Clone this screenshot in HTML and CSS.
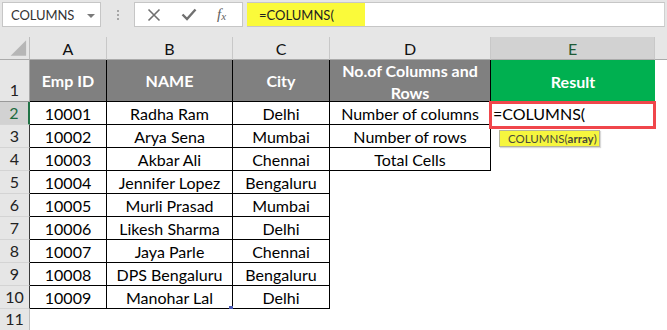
FILE: index.html
```html
<!DOCTYPE html>
<html>
<head>
<meta charset="utf-8">
<link rel="stylesheet" href="styles.css">
</head>
<body>
<div class="app">
  <div class="fbar">
    <div class="namebox"><span class="nb-text">COLUMNS</span><span class="caret"></span></div>
    <div class="grip"><i></i><i></i><i></i></div>
    <div class="fbtns">
      <svg class="ico" width="16" height="16" viewBox="0 0 16 16"><path d="M2.5 2.5 L13.5 13.5 M13.5 2.5 L2.5 13.5" stroke="#707070" stroke-width="1.6" fill="none"/></svg>
      <svg class="ico" width="16" height="16" viewBox="0 0 16 16"><path d="M1.5 7.5 L6 12 L14.5 2.5" stroke="#707070" stroke-width="2.4" fill="none"/></svg>
      <span class="fx">f<span class="fxx">x</span></span>
    </div>
    <div class="finput"><span class="hl">=COLUMNS(</span></div>
  </div>

  <div class="sheet">
    <div class="corner"><svg width="30" height="23" viewBox="0 0 30 23"><polygon points="27,4 27,20 11,20" fill="#b6b6b6"/></svg></div>
    <div class="ch">A</div>
    <div class="ch">B</div>
    <div class="ch">C</div>
    <div class="ch">D</div>
    <div class="ch sel">E</div>
    <div class="ch last"></div>

    <div class="rh r1">1</div>
    <div class="hd t">Emp ID</div>
    <div class="hd t">NAME</div>
    <div class="hd t">City</div>
    <div class="hd t wrap">No.of Columns and Rows</div>
    <div class="hd green">Result</div>
    <div class="c"></div>

    <div class="rh sel">2</div>
    <div class="t">10001</div>
    <div class="t">Radha Ram</div>
    <div class="t">Delhi</div>
    <div class="t">Number of columns</div>
    <div class="c active">=COLUMNS(
      <div class="redbox"></div>
      <div class="tip">COLUMNS(<b>array</b>)</div>
    </div>
    <div class="c"></div>

    <div class="rh in">3</div>
    <div class="t">10002</div>
    <div class="t">Arya Sena</div>
    <div class="t">Mumbai</div>
    <div class="t">Number of rows</div>
    <div class="c"></div>
    <div class="c"></div>

    <div class="rh in">4</div>
    <div class="t">10003</div>
    <div class="t">Akbar Ali</div>
    <div class="t">Chennai</div>
    <div class="t">Total Cells</div>
    <div class="c"></div>
    <div class="c"></div>

    <div class="rh in">5</div>
    <div class="t">10004</div>
    <div class="t">Jennifer Lopez</div>
    <div class="t">Bengaluru</div>
    <div class="c"></div>
    <div class="c"></div>
    <div class="c"></div>

    <div class="rh in">6</div>
    <div class="t">10005</div>
    <div class="t">Murli Prasad</div>
    <div class="t">Mumbai</div>
    <div class="c"></div>
    <div class="c"></div>
    <div class="c"></div>

    <div class="rh in">7</div>
    <div class="t">10006</div>
    <div class="t">Likesh Sharma</div>
    <div class="t">Delhi</div>
    <div class="c"></div>
    <div class="c"></div>
    <div class="c"></div>

    <div class="rh in">8</div>
    <div class="t">10007</div>
    <div class="t">Jaya Parle</div>
    <div class="t">Chennai</div>
    <div class="c"></div>
    <div class="c"></div>
    <div class="c"></div>

    <div class="rh in">9</div>
    <div class="t">10008</div>
    <div class="t">DPS Bengaluru</div>
    <div class="t">Bengaluru</div>
    <div class="c"></div>
    <div class="c"></div>
    <div class="c"></div>

    <div class="rh in">10</div>
    <div class="t">10009</div>
    <div class="t mark">Manohar Lal<span class="dot"></span></div>
    <div class="t">Delhi</div>
    <div class="c"></div>
    <div class="c"></div>
    <div class="c"></div>

    <div class="rh r11">11</div>
    <div class="c"></div>
    <div class="c"></div>
    <div class="c"></div>
    <div class="c"></div>
    <div class="c"></div>
    <div class="c"></div>
  </div>
</div>
</body>
</html>
```
FILE: styles.css
```css
* { box-sizing: border-box; }
html, body { margin: 0; padding: 0; }
body {
  width: 667px;
  height: 330px;
  overflow: hidden;
  background: #e6e6e6;
  font-family: Lato, "Liberation Sans", sans-serif;
}
.app { width: 667px; height: 330px; }

/* formula bar */
.fbar {
  height: 37px;
  display: flex;
  align-items: flex-start;
  padding-top: 2px;
}
.namebox {
  margin-left: 2px;
  width: 99px;
  height: 25px;
  background: #fff;
  border: 1px solid #c6c6c6;
  display: flex;
  align-items: center;
  padding-left: 8px;
  position: relative;
  font-size: 13px;
  color: #333;
}
.nb-text { letter-spacing: -0.1px; }
.caret {
  position: absolute;
  right: 5px;
  top: 11px;
  width: 0; height: 0;
  border-left: 4px solid transparent;
  border-right: 4px solid transparent;
  border-top: 4px solid #7a7a7a;
}
.grip {
  width: 33px;
  height: 25px;
  display: flex;
  flex-direction: column;
  align-items: center;
  justify-content: center;
  gap: 2px;
}
.grip i { display: block; width: 2px; height: 2px; background: #a6a6a6; }
.fbtns {
  width: 109px;
  height: 25px;
  background: #fff;
  border: 1px solid #c6c6c6;
  display: flex;
  align-items: center;
  padding-left: 11px;
  gap: 19px;
}
.ico { display: block; }
.fx {
  font-family: "Liberation Serif", serif;
  font-style: italic;
  font-size: 15px;
  color: #606060;
  margin-left: 1px;
}
.fxx { font-size: 11px; position: relative; top: 1px; }
.finput {
  flex: 1;
  margin-left: 4px;
  margin-right: 2px;
  height: 25px;
  background: #fff;
  border: 1px solid #c6c6c6;
  border-left: none;
  border-right: 1px solid #d0d0d0;
  display: flex;
}
.hl {
  width: 118px;
  height: 100%;
  background: #fafa3a;
  display: flex;
  align-items: center;
  padding-left: 12px;
  font-size: 13px;
  color: #222;
}

/* sheet */
.sheet {
  display: grid;
  grid-template-columns: 30px 77px 126px 97px 161px 164px 12px;
  grid-template-rows: 23px 42px repeat(9, 23px) 21px;
  background: #fff;
  font-size: 16px;
  color: #000;
}
.sheet > div {
  display: flex;
  justify-content: center;
  align-items: flex-end;
  line-height: 20px;
  white-space: nowrap;
}
.corner {
  background: #e6e6e6;
  border-right: 1px solid #bdbdbd;
  border-bottom: 1px solid #ababab;
}
.corner svg { display: block; }
.sheet > .ch {
  background: #e6e6e6;
  border-right: 1px solid #c8c8c8;
  border-bottom: 1px solid #ababab;
  align-items: center;
  color: #111;
  padding-top: 1px;
}
.sheet > .ch.sel { background: #d2d2d2; color: #1e5a36; }
.sheet > .ch.last { border-right: none; }
.sheet > .rh {
  background: #e6e6e6;
  border-right: 1px solid #a8a8a8;
  border-bottom: 1px solid #d4d4d4;
  color: #222;
  padding-bottom: 1px;
}
.sheet > .rh.r1 { border-bottom-color: #9a9a9a; }
.sheet > .rh.in { border-right-color: #3a3a3a; }
.sheet > .rh.sel {
  background: #d2d2d2;
  color: #1e6b3e;
  border-right: 2px solid #217346;
}
.sheet > .rh.r11 { border-right-color: #bdbdbd; border-bottom: none; }
.t {
  border-right: 1px solid #000;
  border-bottom: 1px solid #000;
}
.sheet > .hd {
  background: #808080;
  color: #fff;
  font-weight: bold;
  align-items: center;
  padding-top: 1px;
}
.sheet > .hd.wrap {
  white-space: normal;
  text-align: center;
  line-height: 22px;
  padding: 2px 4px 0;
}
.sheet > .hd.green { background: #00b050; }
.sheet > .active {
  position: relative;
  justify-content: flex-start;
  padding-left: 2px;
  padding-bottom: 1px;
  overflow: visible;
  z-index: 2;
}
.redbox {
  position: absolute;
  left: -2px;
  top: -1px;
  width: 167px;
  height: 28px;
  border: 3px solid #f0464b;
}
.tip {
  position: absolute;
  left: 8px;
  top: 28px;
  width: 101px;
  height: 17px;
  background: #f6f63e;
  border: 1px solid #b4b49a;
  box-shadow: 1px 1px 1px rgba(0,0,0,0.15);
  font-size: 11.5px;
  line-height: 15px;
  color: #4a4a3a;
  padding-left: 8px;
  white-space: nowrap;
}
.tip b { font-weight: bold; }
.mark { position: relative; }
.dot {
  position: absolute;
  right: -1px;
  bottom: -1px;
  width: 4px;
  height: 3px;
  background: #4a5ab4;
}
```
